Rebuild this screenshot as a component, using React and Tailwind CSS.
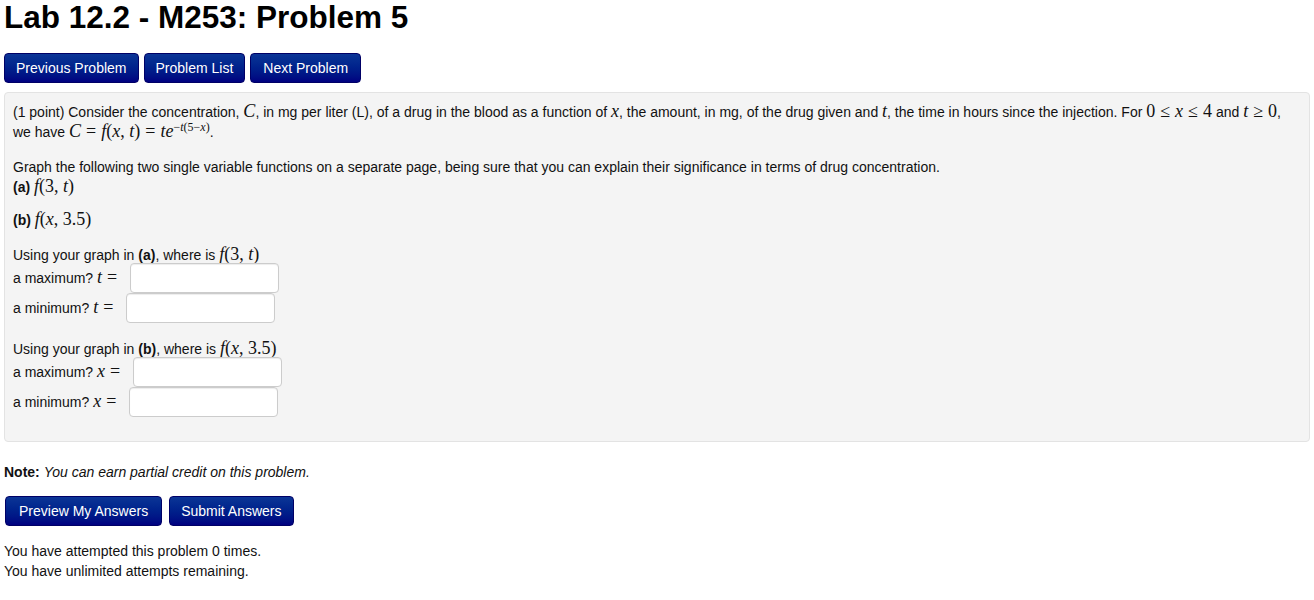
import React from 'react';

const Btn = ({ children, className = '' }) => (
  <button
    className={`h-[30px] px-[11px] rounded-[4px] border border-[#000066] bg-gradient-to-b from-[#0c3596] to-[#000080] text-white text-[14px] leading-none ${className}`}
  >
    {children}
  </button>
);

// inline TeX-ish math
const M = ({ children }) => (
  <span className="font-['Liberation_Serif',serif] text-[18px] leading-none">{children}</span>
);
const I = ({ children }) => <i>{children}</i>;
const Op = ({ children }) => <span className="mx-[5px]">{children}</span>;

const Answer = ({ label, v, className = '' }) => (
  <div className={`flex items-center gap-[8px] h-[30px] ${className}`}>
    <span>
      {label} <M><I>{v}</I><Op>=</Op></M>
    </span>
    <input className="w-[149px] h-[30px] bg-white border border-[#cccccc] rounded-[4px] shadow-[inset_0_1px_1px_rgba(0,0,0,0.075)]" />
  </div>
);

export default function App() {
  return (
    <div className="font-['Liberation_Sans',Arial,sans-serif] text-[14px] text-[#111] px-[4px] pb-6">
      <h1 className="text-[31.5px] font-bold leading-none text-black pt-[2px]">Lab 12.2 - M253: Problem 5</h1>

      <div className="flex gap-[5px] mt-[19px]">
        <Btn>Previous Problem</Btn>
        <Btn>Problem List</Btn>
        <Btn className="px-[12px]">Next Problem</Btn>
      </div>

      <div className="mt-[9px] bg-[#f4f4f4] border border-[#e3e3e3] rounded-[4px] px-[8px] pt-[9px] pb-[24px] leading-[20px]">
        <p>
          (1 point) Consider the concentration, <M><I>C</I></M>, in mg per liter (L), of a drug in the blood as a function of <M><I>x</I></M>, the amount, in mg, of the drug given and <M><I>t</I></M>, the time in hours since the injection. For <M>0<Op>≤</Op><I>x</I><Op>≤</Op>4</M> and <M><I>t</I><Op>≥</Op>0</M>,
          <br />
          we have <M><I>C</I><Op>=</Op><I>f</I>(<I>x</I>, <I>t</I>)<Op>=</Op><I>te</I><sup className="text-[12px]">−<I>t</I>(5−<I>x</I>)</sup></M>.
        </p>

        <p className="mt-[15px]">
          Graph the following two single variable functions on a separate page, being sure that you can explain their significance in terms of drug concentration.
        </p>
        <p>
          <b>(a)</b> <M><I>f</I>(3, <I>t</I>)</M>
        </p>
        <p className="mt-[13px]">
          <b>(b)</b> <M><I>f</I>(<I>x</I>, 3.5)</M>
        </p>

        <p className="mt-[15px]">
          Using your graph in <b>(a)</b>, where is <M><I>f</I>(3, <I>t</I>)</M>
        </p>
        <Answer label="a maximum?" v="t" className="-mt-[2px]" />
        <Answer label="a minimum?" v="t" />

        <p className="mt-[16px]">
          Using your graph in <b>(b)</b>, where is <M><I>f</I>(<I>x</I>, 3.5)</M>
        </p>
        <Answer label="a maximum?" v="x" className="-mt-[2px]" />
        <Answer label="a minimum?" v="x" />
      </div>

      <p className="mt-[20px]">
        <b>Note:</b> <i>You can earn partial credit on this problem.</i>
      </p>

      <div className="flex gap-[7px] mt-[13px] pl-[1px]">
        <Btn className="px-[13px]">Preview My Answers</Btn>
        <Btn>Submit Answers</Btn>
      </div>

      <p className="mt-[15px] leading-[20px]">You have attempted this problem 0 times.</p>
      <p className="leading-[20px]">You have unlimited attempts remaining.</p>
    </div>
  );
}
